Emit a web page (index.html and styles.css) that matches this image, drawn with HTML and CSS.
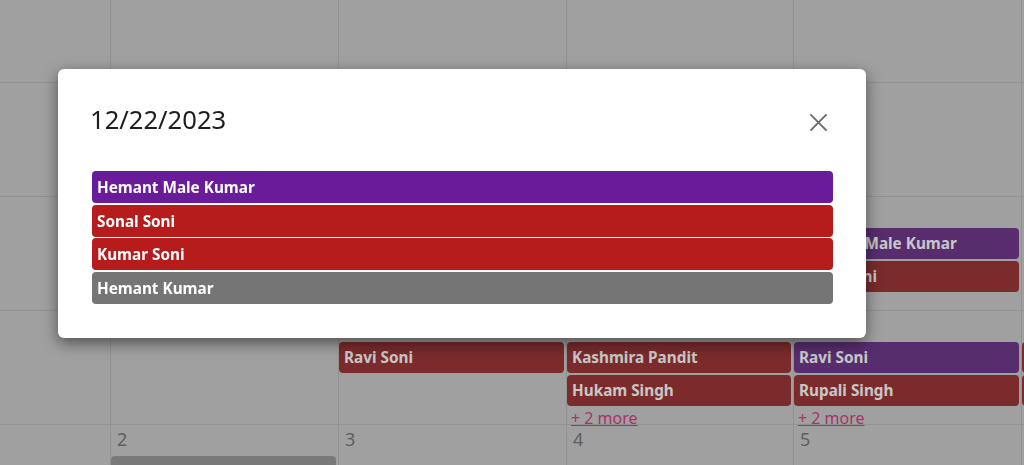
FILE: index.html
```html
<!DOCTYPE html>
<html lang="en">
<head>
<meta charset="utf-8">
<title>Calendar</title>
<link rel="stylesheet" href="styles.css">
</head>
<body>
<div class="viewport">
<div class="calendar">
  <div class="cell"><div class="day-num">4</div></div>
  <div class="cell"><div class="day-num">5</div></div>
  <div class="cell"><div class="day-num">6</div></div>
  <div class="cell"><div class="day-num">7</div></div>
  <div class="cell"><div class="day-num">8</div></div>
  <div class="cell"><div class="day-num">9</div></div>

  <div class="cell"><div class="day-num">11</div></div>
  <div class="cell"><div class="day-num">12</div></div>
  <div class="cell"><div class="day-num">13</div></div>
  <div class="cell"><div class="day-num">14</div></div>
  <div class="cell"><div class="day-num">15</div></div>
  <div class="cell"><div class="day-num">16</div></div>

  <div class="cell"><div class="day-num">18</div></div>
  <div class="cell"><div class="day-num">19</div></div>
  <div class="cell"><div class="day-num">20</div></div>
  <div class="cell"><div class="day-num">21</div></div>
  <div class="cell">
    <div class="day-num">22</div>
    <div class="ev ev-purple">Hemant Male Kumar</div>
    <div class="ev ev-red">Sonal Soni</div>
    <div class="more">+ 2 more</div>
  </div>
  <div class="cell"><div class="day-num">23</div></div>

  <div class="cell"><div class="day-num">25</div></div>
  <div class="cell"><div class="day-num">26</div></div>
  <div class="cell">
    <div class="day-num">27</div>
    <div class="ev ev-red">Ravi Soni</div>
  </div>
  <div class="cell">
    <div class="day-num">28</div>
    <div class="ev ev-red">Kashmira Pandit</div>
    <div class="ev ev-red">Hukam Singh</div>
    <div class="more">+ 2 more</div>
  </div>
  <div class="cell">
    <div class="day-num">29</div>
    <div class="ev ev-purple">Ravi Soni</div>
    <div class="ev ev-red">Rupali Singh</div>
    <div class="more">+ 2 more</div>
  </div>
  <div class="cell">
    <div class="day-num">30</div>
    <div class="ev ev-red">Sonal Soni</div>
    <div class="ev ev-red">Kumar Soni</div>
  </div>

  <div class="cell"><div class="day-num">1</div></div>
  <div class="cell">
    <div class="day-num">2</div>
    <div class="ev ev-grey">Hemant Kumar</div>
  </div>
  <div class="cell"><div class="day-num">3</div></div>
  <div class="cell"><div class="day-num">4</div></div>
  <div class="cell"><div class="day-num">5</div></div>
  <div class="cell"><div class="day-num">6</div></div>
</div>
</div>

<div class="backdrop"></div>

<div class="modal" role="dialog">
  <div class="modal-header">
    <h2 class="modal-title">12/22/2023</h2>
    <button class="close" type="button" aria-label="Close">
      <svg viewBox="0 0 20 20"><path d="M1.5 1.5L18.5 18.5M18.5 1.5L1.5 18.5" stroke="#6b6b6b" stroke-width="2" fill="none"/></svg>
    </button>
  </div>
  <div class="list">
    <div class="ev m-purple">Hemant Male Kumar</div>
    <div class="ev m-red">Sonal Soni</div>
    <div class="ev m-red">Kumar Soni</div>
    <div class="ev m-grey">Hemant Kumar</div>
  </div>
</div>
</body>
</html>
```
FILE: styles.css
```css
html, body {
  margin: 0;
  overflow: hidden;
}
body {
  font-family: "Noto Sans", "Open Sans", sans-serif;
  background: #cdcdcd;
  height: 465px;
}

.viewport {
  width: 1024px;
  height: 465px;
  overflow: hidden;
}
.calendar {
  display: grid;
  grid-template-columns: 228px 228px 228px 227px 228px 228px;
  grid-template-rows: repeat(5, 114px);
  margin: -32px 0 0 -118px;
}
.cell {
  border-left: 1px solid #bcbcbc;
  border-top: 1px solid #bcbcbc;
  padding-right: 2px;
  min-width: 0;
}
.day-num {
  height: 31px;
  box-sizing: border-box;
  padding: 2px 0 0 6px;
  font-size: 18px;
  line-height: 24px;
  color: #7a7a7a;
}
.ev {
  height: 31px;
  line-height: 31px;
  border-radius: 4px;
  padding: 0 5px;
  margin-bottom: 2px;
  font-size: 15.3px;
  font-weight: 700;
  color: #fff;
  white-space: nowrap;
  overflow: hidden;
}
.ev-purple { background: #703a8e; }
.ev-red { background: #9e3838; }
.ev-grey { background: #9b9b9b; }
.more {
  margin-top: 1px;
  padding-left: 4px;
  font-size: 16px;
  line-height: 20px;
  color: #dc3f86;
  text-decoration: underline;
}

.backdrop {
  position: fixed;
  inset: 0;
  background: rgba(0, 0, 0, 0.22);
}

.modal {
  position: absolute;
  left: 58px;
  top: 69px;
  width: 808px;
  box-sizing: border-box;
  background: #fff;
  border-radius: 6px;
  box-shadow: 0 5px 15px rgba(0, 0, 0, 0.5);
  padding: 32px 33px 34.5px 32px;
}
.modal-header {
  display: flex;
  justify-content: space-between;
  align-items: flex-start;
  margin-bottom: 33px;
}
.modal-title {
  margin: 0;
  font-size: 25.6px;
  line-height: 37px;
  font-weight: 400;
  color: #1e1e1e;
}
.close {
  margin-top: 6px;
  width: 30px;
  height: 30px;
  padding: 0;
  border: 0;
  background: none;
  display: flex;
  align-items: center;
  justify-content: center;
}
.close svg {
  width: 19px;
  height: 19px;
}
.list {
  display: flex;
  flex-direction: column;
  gap: 1.5px;
  margin-left: 2px;
}
.list .ev {
  height: 32px;
  line-height: 32px;
  margin: 0;
}
.m-purple { background: #6a1b9a; }
.m-red { background: #b71c1c; }
.m-grey { background: #757575; }
```
